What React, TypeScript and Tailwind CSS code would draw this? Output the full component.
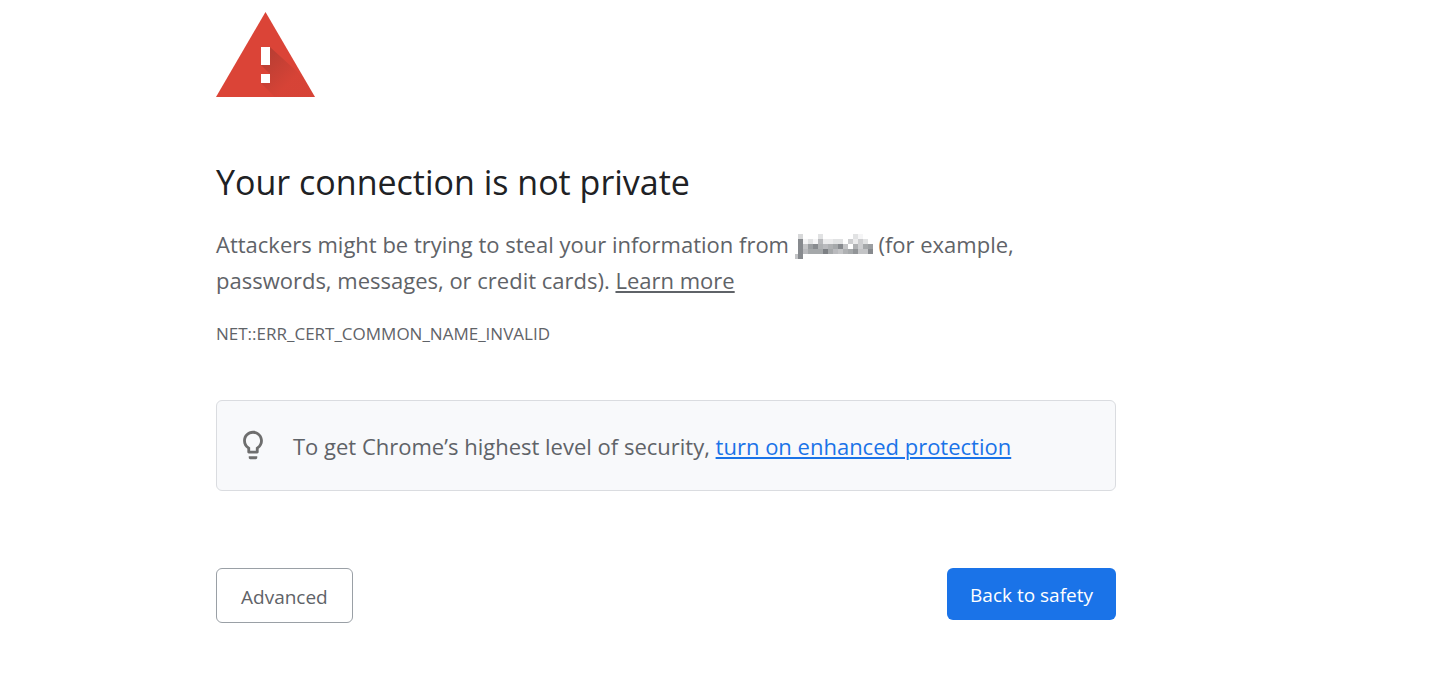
import type { ReactNode } from 'react';

interface LinkProps {
  href: string;
  className?: string;
  children: ReactNode;
}

// One string per row of blocks, one hex digit per block: 0 is empty, f is darkest
const HOST_BLOCKS = [
  '0400030000003100',
  '0c13172233052530',
  '0c6ac8789c60859a',
  '0c7999d97689b66c',
  '6c00000000000000',
];

function TextLink({ href, className = '', children }: LinkProps) {
  return (
    <a href={href} className={`underline decoration-2 underline-offset-2 ${className}`}>
      {children}
    </a>
  );
}

function WarningIcon() {
  return (
    <svg className="block h-[85px] w-[99px]" viewBox="0 0 99 85" role="img" aria-label="Warning">
      <defs>
        <linearGradient id="shade" x1="48" y1="44" x2="74" y2="70" gradientUnits="userSpaceOnUse">
          <stop offset="0" stopColor="#3e2723" stopOpacity="0.22" />
          <stop offset="1" stopColor="#3e2723" stopOpacity="0.03" />
        </linearGradient>
      </defs>
      <path d="M49.5 0 99 85H0z" fill="#db4437" />
      <path d="M54 35 87 65 99 85H59L45 71 54 62 45 53z" fill="url(#shade)" />
      <path d="M45 35h9v18h-9zM45 62h9v9h-9z" fill="#fff" />
    </svg>
  );
}

function HiddenHost() {
  return (
    <svg
      className="inline-block h-[25px] w-[78px] align-text-bottom"
      viewBox="2 0 78 25"
      shapeRendering="crispEdges"
      role="img"
      aria-label="Hidden host"
    >
      {HOST_BLOCKS.map((row, y) =>
        row.split('').map((level, x) => (
          <rect
            key={`${x}-${y}`}
            x={x * 5}
            y={y * 5}
            width="5"
            height="5"
            fill="#5f6368"
            fillOpacity={parseInt(level, 16) / 16}
          />
        ))
      )}
    </svg>
  );
}

function BulbIcon() {
  return (
    <svg className="size-[34px] shrink-0" viewBox="0 0 24 24" fill="#6e6e6e" aria-hidden="true">
      <path d="M9 21c0 .5.4 1 1 1h4c.6 0 1-.5 1-1v-1H9v1zm3-19C8.1 2 5 5.1 5 9c0 2.400 1.200 4.500 3 5.700V17c0 .5.4 1 1 1h6c.6 0 1-.5 1-1v-2.300c1.800-1.300 3-3.400 3-5.700 0-3.900-3.100-7-7-7zm2.900 11.100-.9.600V16h-4v-2.300l-.9-.6C7.800 12.200 7 10.600 7 9c0-2.800 2.200-5 5-5s5 2.200 5 5c0 1.600-.8 3.200-2.100 4.100z" />
    </svg>
  );
}

export default function App() {
  return (
    <div className="min-h-screen bg-white pt-3 pr-[132px] pb-6 pl-6 font-['Segoe_UI','Open_Sans','Noto_Sans',sans-serif] text-[#5f6368]">
      <main className="mx-auto max-w-[900px]">
        <WarningIcon />
        <h1 className="mt-[61px] text-[34px] leading-[48px] text-[#202124]">
          Your connection is not private
        </h1>
        <p className="mt-5 max-w-[840px] text-[22px] leading-[36px]">
          Attackers might be trying to steal your information from <HiddenHost /> (for example,
          passwords, messages, or credit cards). <TextLink href="#learn-more">Learn more</TextLink>
        </p>
        <p className="mt-6 text-[17px] leading-[24px]">NET::ERR_CERT_COMMON_NAME_INVALID</p>

        <div className="mt-[54px] flex items-start gap-[23px] rounded-md border border-[#dadce0] bg-[#f8f9fb] px-[19px] pt-[27px] pb-[26px]">
          <BulbIcon />
          <p className="text-[22px] leading-[36px]">
            To get Chrome’s highest level of security,{' '}
            <TextLink href="#enhanced-protection" className="text-[#1a73e8]">
              turn on enhanced protection
            </TextLink>
          </p>
        </div>

        <div className="mt-[77px] flex items-start justify-between">
          <button className="rounded-md border border-[#9aa0a6] px-6 pt-[14px] pb-[11px] text-[19px] leading-[28px]">
            Advanced
          </button>
          <button className="rounded-md bg-[#1a73e8] px-[23px] pt-[13px] pb-[11px] text-[19px] leading-[28px] text-white">
            Back to safety
          </button>
        </div>
      </main>
    </div>
  );
}
